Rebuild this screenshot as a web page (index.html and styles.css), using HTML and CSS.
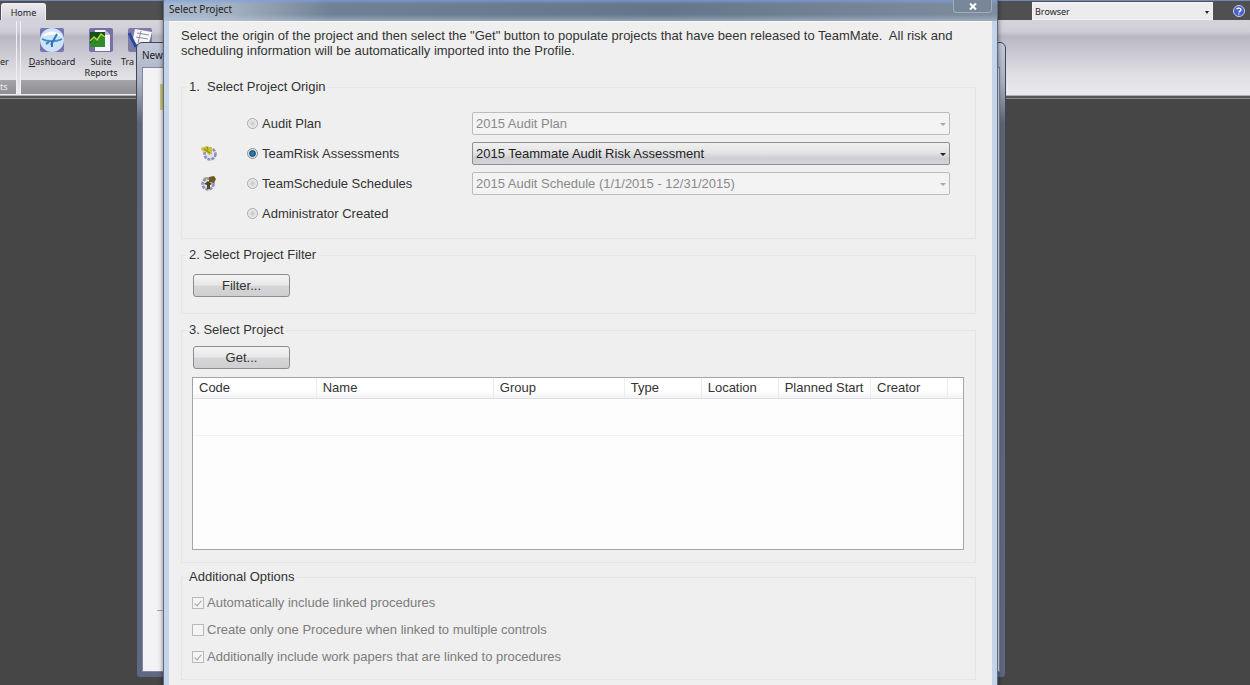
FILE: index.html
```
<!DOCTYPE html>
<html lang="en">
<head>
  <meta charset="UTF-8">
  <meta name="viewport" content="width=device-width, initial-scale=1.0">
  <title>Select Project</title>
  <link rel="stylesheet" href="styles.css">
</head>
<body>
  <div class="desktop">

    <!-- Ribbon -->
    <header class="topbar">
      <button class="tab">Home</button>
      <div class="topbar-right">
        <div class="dropdown browser">
          <select aria-label="View"><option>Browser</option></select>
        </div>
        <button class="help" aria-label="Help">
          <svg width="12" height="12" viewBox="0 0 12 12">
            <circle cx="6" cy="6" r="5.5" fill="#4a62c8" stroke="#c3cdf2"/>
            <path d="M3.6 4.2C4.6 2.6 8 2.8 7.9 4.8C7.8 6.1 6.2 6.1 6 7.4M5.8 8.6v1" fill="none" stroke="#fff" stroke-width="1.4"/>
          </svg>
        </button>
      </div>
    </header>

    <nav class="ribbon">
      <div class="group group-first">
        <div class="group-items"><button class="tool">er</button></div>
        <div class="group-label">ts</div>
      </div>
      <div class="group group-main">
        <div class="group-items">
          <button class="tool tool-dashboard">
            <svg width="26" height="26" viewBox="0 0 26 26">
              <rect x="1" y="1" width="24" height="24" rx="2" fill="#7674b4"/>
              <circle cx="13" cy="13" r="12" fill="#cfe3f6"/>
              <path d="M3 10C6 3 20 3 23 10C18 7 8 7 3 10z" fill="#fff"/>
              <path d="M3 12C8 15 18 15 23 12" fill="none" stroke="#3d8cd0" stroke-width="2"/>
              <path d="M18 7L12 18M13 14v6M7 17l3-2" fill="none" stroke="#2a78c4" stroke-width="2"/>
            </svg>
            <span><u>D</u>ashboard</span>
          </button>
          <button class="tool tool-reports">
            <svg width="26" height="26" viewBox="0 0 26 26">
              <rect x="1" y="1" width="24" height="24" rx="2" fill="#7672a8"/>
              <path d="M7 3h10l5 5v16H7z" fill="#f4f4fa"/>
              <path d="M17 3v5h5z" fill="#b9b7d2"/>
              <rect x="2" y="5" width="15" height="15" fill="#17501f"/>
              <path d="M2 17l4-6 3 4 4-8 4 4v9H2z" fill="#2f8b2b"/>
              <path d="M2 14l4-4 3 3 4-6 4 3" fill="none" stroke="#b5d638" stroke-width="1.5"/>
            </svg>
            <span>Suite<br>Reports</span>
          </button>
          <button class="tool tool-track">
            <svg width="26" height="26" viewBox="0 0 26 26">
              <rect x="1" y="1" width="24" height="24" rx="2" fill="#7f7ba8"/>
              <path d="M8 2l17 3-4 14-16-3z" fill="#f7f7fa"/>
              <path d="M10 6l12 2M9 10l12 2M14 4l-3 12" stroke="#8c8c98" fill="none"/>
              <path d="M2 6l7 14" stroke="#27499c" stroke-width="3" fill="none"/>
            </svg>
            <span>Tra</span>
          </button>
        </div>
        <div class="group-label"></div>
      </div>
    </nav>

    <!-- Window behind the dialog -->
    <section class="window-back">
      <div class="window-back-title">New</div>
      <div class="window-back-body">
        <div class="marker"></div>
        <div class="rule"></div>
      </div>
    </section>

    <!-- Dialog -->
    <main class="dialog">
      <div class="dialog-title">
        <span>Select Project</span>
        <button class="close" aria-label="Close">
          <svg width="10" height="9" viewBox="0 0 10 9"><path d="M2 1.5l6 6M8 1.5l-6 6" stroke="#fff" stroke-width="2"/></svg>
        </button>
      </div>

      <form class="dialog-body">
        <p class="intro">Select the origin of the project and then select the "Get" button to populate projects that have been released to TeamMate.&nbsp; All risk and scheduling information will be automatically imported into the Profile.</p>

        <fieldset class="origin">
          <legend>1.&nbsp; Select Project Origin</legend>
          <div class="origin-row">
            <span class="origin-icon"></span>
            <label><input type="radio" name="origin">Audit Plan</label>
            <div class="dropdown">
              <select aria-label="Audit plan" disabled><option>2015 Audit Plan</option></select>
            </div>
          </div>
          <div class="origin-row">
            <span class="origin-icon">
              <svg width="16" height="16" viewBox="0 0 16 16">
                <circle cx="9" cy="9" r="5.5" fill="#dfe3f2" stroke="#8d90bb" stroke-width="2.6" stroke-dasharray="3 1"/>
                <path d="M0 3l6-2 5 2v6l-3 1-3-3-4-1z" fill="#cdc136"/>
                <path d="M3 4l6 4M6 2l1 3" stroke="#958c22" stroke-width="1.3"/>
              </svg>
            </span>
            <label><input type="radio" name="origin" checked>TeamRisk Assessments</label>
            <div class="dropdown">
              <select aria-label="Risk assessment"><option>2015 Teammate Audit Risk Assessment</option></select>
            </div>
          </div>
          <div class="origin-row">
            <span class="origin-icon">
              <svg width="16" height="16" viewBox="0 0 16 16">
                <circle cx="7" cy="9" r="5.5" fill="#dfe3f2" stroke="#8d90bb" stroke-width="2.6" stroke-dasharray="3 1"/>
                <path d="M8 2l5-1 2 3-2 4-5-1z" fill="#6d5a20"/>
                <path d="M3 9l4-3 4 3-2 1v4H6v-4z" fill="#54451f"/>
                <path d="M2 3l4-1-1 3z" fill="#b59a3a"/>
              </svg>
            </span>
            <label><input type="radio" name="origin">TeamSchedule Schedules</label>
            <div class="dropdown">
              <select aria-label="Schedule" disabled><option>2015 Audit Schedule (1/1/2015 - 12/31/2015)</option></select>
            </div>
          </div>
          <div class="origin-row">
            <span class="origin-icon"></span>
            <label><input type="radio" name="origin">Administrator Created</label>
          </div>
        </fieldset>

        <fieldset class="filter">
          <legend>2. Select Project Filter</legend>
          <button type="button" class="btn">Filter...</button>
        </fieldset>

        <fieldset class="project">
          <legend>3. Select Project</legend>
          <button type="button" class="btn">Get...</button>
          <div class="list">
            <table>
              <colgroup>
                <col class="col-code"><col class="col-name"><col class="col-group"><col class="col-type">
                <col class="col-location"><col class="col-start"><col class="col-creator"><col class="col-end">
              </colgroup>
              <thead>
                <tr><th>Code</th><th>Name</th><th>Group</th><th>Type</th><th>Location</th><th>Planned Start</th><th>Creator</th><th></th></tr>
              </thead>
              <tbody>
                <tr><td></td><td></td><td></td><td></td><td></td><td></td><td></td><td></td></tr>
              </tbody>
            </table>
          </div>
        </fieldset>

        <fieldset class="options">
          <legend>Additional Options</legend>
          <label><input type="checkbox" checked disabled>Automatically include linked procedures</label>
          <label><input type="checkbox" disabled>Create only one Procedure when linked to multiple controls</label>
          <label><input type="checkbox" checked disabled>Additionally include work papers that are linked to procedures</label>
        </fieldset>
      </form>
    </main>
  </div>
</body>
</html>
```
FILE: styles.css
```
* {
  box-sizing: border-box;
}

body {
  margin: 0;
  background: #464646;
  font-family: "Liberation Sans", Arial, sans-serif;
  font-size: 13px;
  color: #333;
}

button,
select {
  font-family: inherit;
  font-size: inherit;
  color: inherit;
}

.desktop {
  position: relative;
  height: 100vh;
  overflow: hidden;
}

/* Ribbon */
.topbar,
.ribbon,
.window-back-title,
.dialog-title {
  font-family: "Noto Sans", sans-serif;
  font-size: 9px;
  color: #222;
}

.topbar {
  display: flex;
  justify-content: space-between;
  align-items: flex-end;
  height: 20px;
  padding-left: 1px;
  background: #505052;
  border-top: 1px solid #7189b5;
}

.tab {
  width: 45px;
  height: 17px;
  padding: 0;
  border: 1px solid #f0f0f4;
  border-bottom: none;
  border-radius: 3px 3px 0 0;
  background: linear-gradient(#e9e9ee, #d3d2da);
}

.topbar-right {
  display: flex;
  align-items: center;
  gap: 20px;
  height: 18px;
  padding-right: 5px;
}

.browser {
  width: 181px;
}

.help {
  display: flex;
  padding: 0;
  border: none;
  background: none;
}

.ribbon {
  display: flex;
  gap: 3px;
  height: 76px;
  padding-top: 1px;
  background: linear-gradient(#d6d4db 0%, #cfcdd6 15%, #b9b7c3 22%, #cfced7 50%, #dddde2 70%, #ebebef 100%);
  border-bottom: 1px solid #b0b0b4;
  box-shadow: 0 2px 0 #555, 0 3px 0 #8b8b8d;
}

.group {
  display: flex;
  flex-direction: column;
  justify-content: space-between;
  height: 73px;
  border-right: 1px solid #f0f0f4;
}

.group-first {
  width: 17px;
}

.group-main {
  width: 220px;
  border-left: 1px solid #f0f0f4;
}

.group-items {
  display: flex;
  padding-top: 6px;
}

.group-label {
  height: 14px;
  background: linear-gradient(#a5a5a9, #8f8f93);
  color: #eee;
  line-height: 13px;
}

.tool {
  display: flex;
  flex-direction: column;
  align-items: center;
  gap: 3px;
  padding: 0;
  border: none;
  background: none;
  line-height: 11px;
}

.group-first .tool {
  padding-top: 29px;
}

.tool-dashboard {
  width: 62px;
}

.tool-reports {
  width: 36px;
}

.tool-track {
  align-items: flex-start;
  padding-left: 2px;
}

.tool-track svg {
  margin-left: 6px;
}

/* Background window */
.window-back {
  position: absolute;
  top: 42px;
  right: 244px;
  bottom: 7px;
  left: 136px;
  display: flex;
  flex-direction: column;
  padding: 0 5px 5px;
  border: 1px solid #3f4656;
  border-radius: 6px 6px 4px 4px;
  background: linear-gradient(#c3cadb, #a9b0c2 40px, #5e6675 80px, #5f6880);
}

.window-back-title {
  height: 24px;
  font-size: 10px;
  line-height: 24px;
}

.window-back-body {
  flex: 1;
  display: flex;
  flex-direction: column;
  justify-content: space-between;
  padding: 16px 0 60px 14px;
  border: 1px solid #8088a0;
  background: #f3f3f6;
}

.marker {
  width: 16px;
  height: 26px;
  margin-left: 3px;
  background: #cfcb7a;
}

.rule {
  width: 20px;
  height: 1px;
  background: #aaa;
}

/* Dialog */
.dialog {
  position: absolute;
  top: 0;
  right: 252px;
  left: 163px;
  padding: 0 5px 8px;
  border: 1px solid #5c6a80;
  border-top: none;
  background: #c6d4ea;
  box-shadow: 0 0 5px rgba(0, 0, 0, 0.5);
}

.dialog-title {
  display: flex;
  justify-content: space-between;
  align-items: flex-start;
  height: 21px;
  margin: 0 -5px;
  padding: 0 5px;
  background:
    linear-gradient(rgba(125, 160, 225, 0.7), rgba(125, 160, 225, 0) 20%, rgba(190, 205, 225, 0) 70%, rgba(190, 205, 225, 0.5)),
    linear-gradient(90deg, #a9b9cd, #a3b1c1 8%, #718195 20%, #66768a 60%, #7f8d9f);
  font-size: 10px;
  line-height: 19px;
}

.close {
  display: flex;
  justify-content: center;
  align-items: center;
  width: 39px;
  height: 13px;
  padding: 0;
  border: 1px solid #a3adba;
  border-top: none;
  border-radius: 0 0 4px 4px;
  background: #78869a;
}

.dialog-body {
  padding: 6px 16px 12px 12px;
  border-top: 1px solid #f8f8f8;
  background: #efefef;
}

.intro {
  margin: 0;
  line-height: 15px;
}

fieldset {
  min-width: 0;
  margin: 0;
  padding: 0 5px;
  border: 1px solid #e5e5e7;
}

legend {
  height: 16px;
  padding: 0 2px;
  line-height: 16px;
}

input {
  appearance: none;
  flex: none;
  margin: 0;
}

label {
  display: flex;
  align-items: center;
}

.origin {
  margin-top: 21px;
  padding-top: 13px;
  padding-bottom: 10px;
}

.origin-row {
  display: grid;
  grid-template-columns: 46px 225px 1fr;
  align-items: center;
  height: 30px;
  padding: 0 20px 0 14px;
}

.origin-icon {
  height: 16px;
}

.origin-row label {
  gap: 4px;
}

input[type="radio"] {
  width: 11px;
  height: 11px;
  border: 1px solid #a9a9ad;
  border-radius: 50%;
  background: radial-gradient(#c8c8ca, #eee 70%);
}

input[type="radio"]:checked {
  border-color: #8a9097;
  background: radial-gradient(#2f7ba8 20%, #1f4f72 45%, #dde6ec 60%);
}

.dropdown {
  position: relative;
}

.dropdown::after {
  content: "";
  position: absolute;
  top: 50%;
  right: 4px;
  border: 3px solid transparent;
  border-top-color: #222;
  border-bottom: none;
  pointer-events: none;
}

.dropdown:has(:disabled)::after {
  border-top-color: #aaa;
}

select {
  appearance: none;
  display: block;
  width: 100%;
  height: 23px;
  padding: 0 16px 0 3px;
  border: 1px solid #8e9096;
  border-radius: 2px;
  background: linear-gradient(#f0f0f0, #e4e4e6 45%, #cdced2 75%, #d3d4d8);
  color: #222;
}

select:disabled {
  border-color: #bcbcc0;
  background: #f3f3f3;
  color: #8a8a8a;
  opacity: 1;
}

.browser select {
  height: 18px;
  padding-left: 2px;
  border: 1px solid #f4f4f6;
  border-radius: 0;
  background: #ececee;
}

.browser::after {
  border-width: 3px 2px 0;
}

.btn {
  display: block;
  width: 97px;
  height: 23px;
  margin-left: 6px;
  padding: 0;
  border: 1px solid #8c8c90;
  border-radius: 3px;
  background: linear-gradient(#f3f3f3, #e8e8e8 48%, #d6d6d8 52%, #cfcfd1);
}

.filter {
  margin-top: 8px;
  padding-top: 11px;
  padding-bottom: 16px;
}

.project {
  margin-top: 8px;
  padding-top: 8px;
  padding-bottom: 12px;
}

.list {
  height: 173px;
  margin: 8px 6px 0 5px;
  border: 1px solid #a2a5aa;
  background: #fdfdfe;
}

table {
  width: 100%;
  border-collapse: collapse;
  table-layout: fixed;
}

.col-code { width: 16%; }
.col-name { width: 23%; }
.col-group { width: 17%; }
.col-type { width: 10%; }
.col-location { width: 10%; }
.col-start { width: 12%; }
.col-creator { width: 10%; }
.col-end { width: 2%; }

th {
  height: 20px;
  padding: 0 0 0 6px;
  border-right: 1px solid #ececf0;
  border-bottom: 1px solid #dfdfe3;
  background: linear-gradient(#fff, #fff 60%, #f4f4f6);
  font-weight: normal;
  text-align: left;
  white-space: nowrap;
}

th:last-child {
  border-right: none;
}

td {
  height: 37px;
  padding: 0;
  border-bottom: 1px solid #f0f0f2;
}

.options {
  margin-top: 6px;
  padding-top: 4px;
  padding-bottom: 9px;
}

.options label {
  gap: 3px;
  height: 27px;
  margin-left: 5px;
  color: #7c7c7c;
}

input[type="checkbox"] {
  display: flex;
  justify-content: center;
  align-items: center;
  width: 12px;
  height: 12px;
  border: 1px solid #b9b9bc;
  background: #f4f4f4;
}

input[type="checkbox"]:checked::after {
  content: "";
  width: 3px;
  height: 6px;
  border: solid #a0a0a4;
  border-width: 0 1px 1px 0;
  transform: rotate(40deg);
}
```
